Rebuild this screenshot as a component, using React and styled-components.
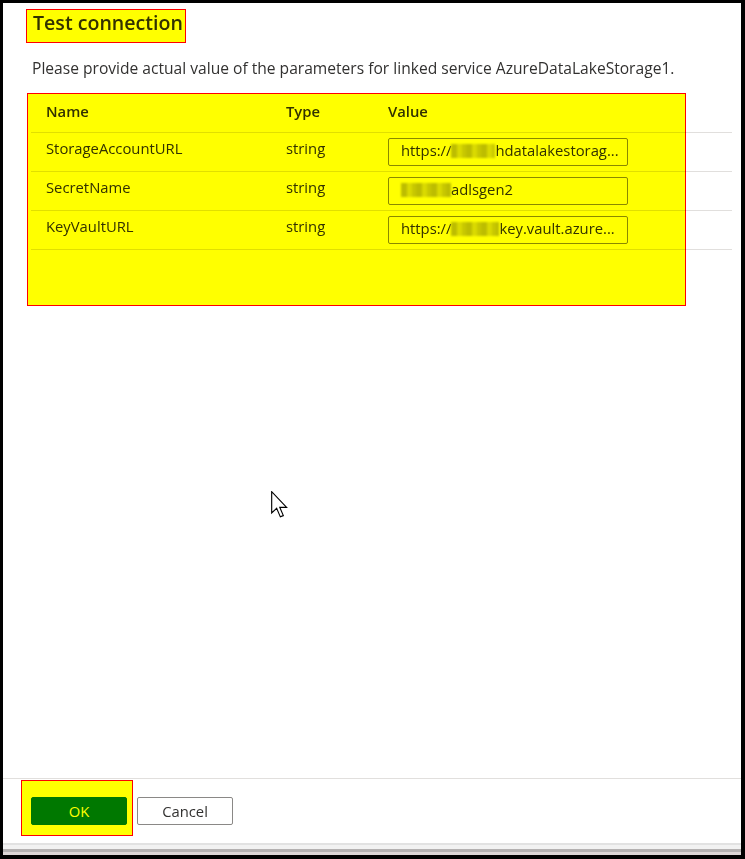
import React from "react";
import styled, { createGlobalStyle } from "styled-components";

const Global = createGlobalStyle`
  html, body { margin: 0; padding: 0; background: #fff; }
  *, *::before, *::after { box-sizing: border-box; }
`;

const FONT = `"Segoe UI", "Open Sans", "Noto Sans", sans-serif`;

const Frame = styled.div`
  width: 745px;
  height: 859px;
  border-style: solid;
  border-color: #000;
  border-width: 3px 4px 4px 3px;
  background: #fff;
  display: flex;
  flex-direction: column;
  font-family: ${FONT};
  color: #323130;
`;

const Main = styled.div`
  flex: 1;
  position: relative;
  padding: 6px 9px 0 28px;
  display: flex;
  flex-direction: column;
  align-items: flex-start;
`;

const Mark = styled.div`
  position: relative;
  display: inline-block;
  &::after {
    content: "";
    position: absolute;
    left: ${(p) => p.$l}px;
    top: ${(p) => p.$t}px;
    width: ${(p) => p.$w}px;
    height: ${(p) => p.$h}px;
    background: #ffff00;
    mix-blend-mode: multiply;
    border: 1px solid #ff0000;
    pointer-events: none;
  }
`;

const Title = styled.h1`
  margin: 0;
  font-size: 19.6px;
  font-weight: 600;
  line-height: 28px;
  height: 34px;
  padding: 0 0 6px 2px;
  color: #323130;
  white-space: nowrap;
  display: flex;
  align-items: center;
`;

const Subtitle = styled.p`
  margin: 15px 0 0 1px;
  font-size: 15.6px;
  line-height: 20px;
  padding-bottom: 2px;
  margin-bottom: -2px;
  color: #323130;
  white-space: nowrap;
`;

const TableWrap = styled(Mark)`
  display: block;
  width: 701px;
  margin-top: 15px;
`;

const Row = styled.div`
  display: grid;
  grid-template-columns: 240px 102px 1fr;
  align-items: center;
  height: ${(p) => (p.$head ? 40 : 39)}px;
  border-bottom: 1px solid #e1dfdd;
`;

const Cell = styled.div`
  padding-left: 15px;
  padding-bottom: ${(p) => (p.$head ? 3 : 8)}px;
  font-size: 14.8px;
  font-weight: ${(p) => (p.$head ? 600 : 400)};
  color: #323130;
  white-space: nowrap;
`;

const ValueCell = styled.div`
  padding-left: 15px;
`;

const ValueBox = styled.div`
  width: 240px;
  height: 28px;
  border: 1px solid #8a8886;
  border-radius: 2px;
  padding: 0 12px;
  font-size: 14.8px;
  line-height: 22px;
  color: #323130;
  white-space: nowrap;
  overflow: hidden;
`;

const Blur = styled.span`
  display: inline-block;
  width: ${(p) => p.$w}px;
  height: 14px;
  vertical-align: -2px;
  background: repeating-linear-gradient(90deg, #bdbdbd 0 6px, #dadada 6px 11px, #c8c8c8 11px 15px);
  filter: blur(1.2px);
`;

const Spacer = styled.div`
  height: 56px;
`;

const Cursor = styled.svg`
  position: absolute;
  left: 267px;
  top: 488px;
  width: 19px;
  height: 27px;
`;

const Footer = styled.div`
  border-top: 1px solid #e1dfdd;
  padding: 18px 0 0 28px;
  height: 65px;
  display: flex;
  align-items: flex-start;
  gap: 10px;
`;

const Button = styled.button`
  width: 96px;
  height: 28px;
  border-radius: 2px;
  font-family: ${FONT};
  font-size: 14.8px;
  font-weight: 400;
  line-height: 24px;
  padding: 0;
  cursor: pointer;
  border: 1px solid ${(p) => (p.$primary ? "#0078d4" : "#8a8886")};
  background: ${(p) => (p.$primary ? "#0078d4" : "#fff")};
  color: ${(p) => (p.$primary ? "#fff" : "#323130")};
`;

const BottomEdge = styled.div`
  height: 12px;
  background: linear-gradient(
    to bottom,
    #e2e2e2 0 2px,
    #f2f2f2 2px 6px,
    #b4b1b1 6px 9px,
    #ddd6d6 9px 12px
  );
`;

const rows = [
  { name: "StorageAccountURL", type: "string", pre: "https://", blur: 44, post: "hdatalakestorag..." },
  { name: "SecretName", type: "string", pre: "", blur: 50, post: "adlsgen2" },
  { name: "KeyVaultURL", type: "string", pre: "https://", blur: 48, post: "key.vault.azure..." },
];

export default function App() {
  return (
    <>
      <Global />
      <Frame>
        <Main>
          <Mark $l={-5} $t={0} $w={160} $h={34}>
            <Title>Test connection</Title>
          </Mark>
          <Subtitle>
            Please provide actual value of the parameters for linked service AzureDataLakeStorage1.
          </Subtitle>
          <TableWrap $l={-4} $t={0} $w={659} $h={213}>
            <Row $head>
              <Cell $head>Name</Cell>
              <Cell $head>Type</Cell>
              <Cell $head>Value</Cell>
            </Row>
            {rows.map((r) => (
              <Row key={r.name}>
                <Cell>{r.name}</Cell>
                <Cell>{r.type}</Cell>
                <ValueCell>
                  <ValueBox>
                    {r.pre}
                    <Blur $w={r.blur} />
                    {r.post}
                  </ValueBox>
                </ValueCell>
              </Row>
            ))}
            <Spacer />
          </TableWrap>
          <Cursor viewBox="0 0 12 19">
            <path
              d="M0.5 0.5 L0.5 15.5 L4 12.2 L6.6 18.2 L8.7 17.3 L6.2 11.5 L11 11.5 Z"
              fill="#fff"
              stroke="#000"
              strokeWidth="0.8"
              strokeLinejoin="miter"
            />
          </Cursor>
        </Main>
        <Footer>
          <Mark $l={-10} $t={-17} $w={112} $h={56}>
            <Button $primary>OK</Button>
          </Mark>
          <Button>Cancel</Button>
        </Footer>
        <BottomEdge />
      </Frame>
    </>
  );
}
